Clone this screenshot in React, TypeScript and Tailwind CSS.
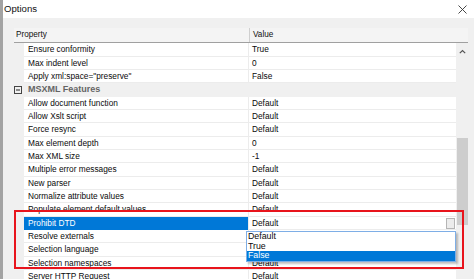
type Row = { name: string; value: string; kind?: "category" | "selected" };

const rows: Row[] = [
  { name: "Ensure conformity", value: "True" },
  { name: "Max indent level", value: "0" },
  { name: 'Apply xml:space="preserve"', value: "False" },
  { name: "MSXML Features", value: "", kind: "category" },
  { name: "Allow document function", value: "Default" },
  { name: "Allow Xslt script", value: "Default" },
  { name: "Force resync", value: "Default" },
  { name: "Max element depth", value: "0" },
  { name: "Max XML size", value: "-1" },
  { name: "Multiple error messages", value: "Default" },
  { name: "New parser", value: "Default" },
  { name: "Normalize attribute values", value: "Default" },
  { name: "Populate element default values", value: "Default" },
  { name: "Prohibit DTD", value: "Default", kind: "selected" },
  { name: "Resolve externals", value: "Default" },
  { name: "Selection language", value: "Default" },
  { name: "Selection namespaces", value: "Default" },
  { name: "Server HTTP Request", value: "Default" },
];

function GridRow({ row }: { row: Row }) {
  if (row.kind === "category") {
    return (
      <div className="flex h-[13.33px] shrink-0 items-center bg-[#f0f0f0]">
        <div className="flex w-[10px] justify-start">
          <svg width="8" height="8" viewBox="0 0 8 8">
            <rect x="0.5" y="0.5" width="7" height="7" fill="none" stroke="#444" />
            <path d="M2 4h4" stroke="#222" />
          </svg>
        </div>
        <span className="pl-[4px] text-[9px] font-bold leading-[13.33px] text-[#646464]">
          {row.name}
        </span>
      </div>
    );
  }
  const selected = row.kind === "selected";
  return (
    <div className="flex h-[13.33px] shrink-0">
      <div className="w-[10px] bg-[#f0f0f0]" />
      <div
        className={
          selected
            ? "w-[225px] border-r border-[#ececec] bg-[#0078d7] pl-[4px] text-[8.3px] leading-[13.33px] text-white"
            : "w-[225px] border-r border-b border-[#ececec] pl-[4px] text-[8.3px] leading-[13px] text-[#0a0a0a]"
        }
      >
        {row.name}
      </div>
      <div className="relative flex-1 border-b border-[#ececec] pl-[3px] text-[8.3px] leading-[13px] text-[#0a0a0a]">
        {row.value}
        {selected && (
          <div className="absolute right-[1px] top-[1px] h-[11px] w-[9px] border border-[#b5b5b5] bg-[#ececec]" />
        )}
      </div>
    </div>
  );
}

export default function App() {
  return (
    <div className="relative flex h-[279px] w-[474px] overflow-hidden bg-[#f0f0f0] font-['Liberation_Sans',Arial,sans-serif]">
      <div className="w-[3px] shrink-0 bg-[#a3a3a3]" />

      <div className="flex flex-1 flex-col">
        {/* title bar */}
        <div className="flex h-[18px] shrink-0 items-center justify-between bg-white pl-[1px] pr-[7px] pt-[1px]">
          <span className="text-[9.6px] text-[#111]">Options</span>
          <svg width="9" height="9" viewBox="0 0 9 9">
            <path d="M0.5 0.5l8 8M8.5 0.5l-8 8" stroke="#333" strokeWidth="0.9" />
          </svg>
        </div>

        <div className="flex flex-1 flex-col pl-[11px] pr-[6px] pt-[10px]">
          {/* header */}
          <div className="flex h-[15.33px] shrink-0 border-b border-[#a0a0a0] bg-[#f4f4f4] text-[8.2px] leading-[14px] text-[#111]">
            <div className="w-[235px] pl-[2px]">Property</div>
            <div className="flex-1 border-l border-[#cfcfcf] pl-[3px]">Value</div>
          </div>

          <div className="flex flex-1 overflow-hidden">
            <div className="flex w-[442px] flex-col bg-white">
              {rows.map((r) => (
                <GridRow key={r.name} row={r} />
              ))}
            </div>

            {/* scrollbar */}
            <div className="flex w-[12px] flex-col bg-[#f0f0f0]">
              <div className="flex h-[17px] items-center justify-center">
                <svg width="7" height="5" viewBox="0 0 7 5">
                  <path d="M0.8 4.2L3.5 1.5l2.7 2.7" fill="none" stroke="#555" strokeWidth="1.2" />
                </svg>
              </div>
              <div className="ml-[1px] mt-[77.67px] h-[87px] w-[11px] bg-[#cdcdcd]" />
            </div>
          </div>
        </div>
      </div>

      {/* dropdown list */}
      <div className="absolute left-[246px] top-[231px] h-[31px] w-[210px] border border-[#7eaee6] bg-white text-[8.8px] leading-[9.7px] text-[#0a0a0a] shadow-[2px_2px_2px_rgba(0,0,0,0.25)]">
        <div className="pl-[1px]">Default</div>
        <div className="pl-[1px]">True</div>
        <div className="bg-[#0078d7] pl-[1px] text-white">False</div>
      </div>

      {/* red annotation box */}
      <div className="absolute left-[14px] top-[210px] h-[59px] w-[450px] border-2 border-[#e8141c]" />
    </div>
  );
}
